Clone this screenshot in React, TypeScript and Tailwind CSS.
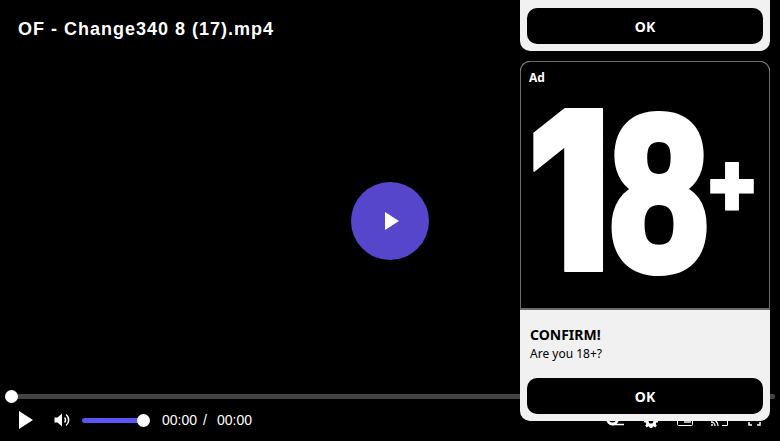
const adFont = { fontFamily: '"Noto Sans", sans-serif' };

/* ─── Ad picture ───────────────────────────────────────────── */

function AdPicture() {
  return (
    <svg viewBox="0 0 250 248" className="block h-[248px] w-[250px]">
      <g fill="white" stroke="white" strokeLinejoin="round" fontWeight="900" style={{ filter: "blur(0.6px)" }}>
        <text x="6" y="210" fontFamily="Inter, sans-serif" fontSize="222" strokeWidth="2" textLength="85" lengthAdjust="spacingAndGlyphs">1</text>
        <text x="90" y="208" fontFamily="Liberation Sans, sans-serif" fontWeight="700" fontSize="219" strokeWidth="10" textLength="98" lengthAdjust="spacingAndGlyphs">8</text>
        <text x="184" y="152" fontFamily="Inter, sans-serif" fontSize="90" strokeWidth="1" textLength="56" lengthAdjust="spacingAndGlyphs">+</text>
      </g>
    </svg>
  );
}

/* ─── Ad card ──────────────────────────────────────────────── */

function OkButton() {
  return (
    <button className="mx-[7px] flex h-[36px] w-[236px] items-center justify-center rounded-[10px] bg-black text-[14px] font-bold text-white">
      OK
    </button>
  );
}

function AdStack() {
  return (
    <div style={adFont} className="absolute bottom-[20px] right-[10px] z-10 flex w-[250px] flex-col gap-[10px]">
      <div className="rounded-b-[10px] bg-[#f1f1f1] pb-[7px] pt-[8px]">
        <OkButton />
      </div>
      <div className="overflow-hidden rounded-[10px] bg-[#f1f1f1] pb-[7px]">
        <div className="relative h-[249px] overflow-hidden rounded-t-[10px] border-x border-t border-b-2 border-[#6b6b6b] bg-black">
          <span className="absolute left-[8px] top-[7px] text-[12px] font-bold leading-[17px] text-white">Ad</span>
          <div className="-mx-px -mt-px">
            <AdPicture />
          </div>
        </div>
        <div className="h-[68px] px-[10px] pt-[15px] text-black">
          <div className="text-[14px] font-bold leading-[19px]">CONFIRM!</div>
          <div className="text-[12px] leading-[19px]">Are you 18+?</div>
        </div>
        <OkButton />
      </div>
    </div>
  );
}

/* ─── Player controls ──────────────────────────────────────── */

function RightIcons() {
  return (
    <div className="mr-[19px] flex items-center text-white">
      {/* Speed */}
      <svg viewBox="0 0 18 14" className="h-[14px] w-[18px]" fill="none" stroke="currentColor">
        <circle cx="6.500" cy="6" r="5" strokeWidth="3" />
        <path d="M6 11.500h12" strokeWidth="1.500" />
      </svg>
      {/* Settings */}
      <svg viewBox="0 0 18 18" preserveAspectRatio="none" className="ml-[20px] h-[16px] w-[14px]" fill="currentColor">
        <path d="M7.500 1h3l.4 2.200 1.600.7 1.900-1.300 2 2-1.300 1.900.7 1.600 2.200.4v3l-2.200.4-.7 1.600 1.300 1.900-2 2-1.900-1.300-1.600.7-.4 2.200h-3l-.4-2.200-1.600-.7-1.900 1.300-2-2 1.300-1.900-.7-1.600-2.200-.4v-3l2.200-.4.7-1.600-1.300-1.900 2-2 1.900 1.300 1.600-.7zM9 7a3 3 0 1 0 0 6 3 3 0 0 0 0-6z" />
      </svg>
      {/* Picture in picture */}
      <svg viewBox="0 0 16 12" className="ml-[19px] h-[12px] w-[16px]" fill="none" stroke="currentColor">
        <rect x="0.500" y="0.500" width="15" height="11" rx="1" />
        <rect x="7" y="4" width="7" height="5" fill="currentColor" fillOpacity="0.700" stroke="none" />
      </svg>
      {/* Cast */}
      <svg viewBox="0 0 17 12" className="ml-[18px] h-[12px] w-[17px]" fill="none" stroke="currentColor">
        <path d="M0.500 2V0.500h16v11H11" />
        <path d="M0 5a7 7 0 0 1 7 7M0 8a4 4 0 0 1 4 4" strokeWidth="1.300" />
        <circle cx="1" cy="11" r="1" fill="currentColor" stroke="none" />
      </svg>
      {/* Fullscreen */}
      <svg viewBox="0 0 13 12" className="ml-[20px] h-[12px] w-[13px]" fill="none" stroke="currentColor" strokeWidth="1.500">
        <path d="M1 4V1h3M9 1h3v3M12 8v3H9M4 11H1V8" />
      </svg>
    </div>
  );
}

function Controls() {
  return (
    <div className="absolute inset-x-0 bottom-0 h-[51px]">
      <div className="relative mx-[5px] mt-[4px] h-[5px] rounded-full bg-[#444444]">
        <div className="absolute left-0 top-[-4px] h-[13px] w-[13px] rounded-full bg-white" />
      </div>
      <div className="mt-[5px] flex h-[32px] items-center justify-between">
        <div className="flex items-center">
          <svg viewBox="0 0 14 18" className="ml-[19px] h-[18px] w-[14px]">
            <path d="M0 0l14 9-14 9z" fill="white" />
          </svg>
          <svg viewBox="0 0 16 16" className="ml-[21px] h-[16px] w-[16px]" fill="none">
            <path d="M0.500 5.500h3L8 1.500v13l-4.500-4h-3z" fill="white" />
            <path d="M10.500 5.500a3.500 3.500 0 0 1 0 5M12 2.500a7 7 0 0 1 0 11" stroke="white" strokeWidth="1.500" />
          </svg>
          <div className="relative ml-[12px] h-[5px] w-[62px] rounded-full bg-[#5b55f5]">
            <div className="absolute right-[-6px] top-[-4px] h-[13px] w-[13px] rounded-full bg-white" />
          </div>
          <div className="ml-[18px] flex text-[14px] text-white">
            <span>00:00</span>
            <span className="ml-[6px]">/</span>
            <span className="ml-[10px]">00:00</span>
          </div>
        </div>
        <RightIcons />
      </div>
    </div>
  );
}

export default function App() {
  return (
    <div
      style={{ fontFamily: '"Liberation Sans", Arial, sans-serif' }}
      className="relative h-[441px] w-[780px] overflow-hidden bg-black"
    >
      <div className="px-[18px] pt-[17px] text-[18px] font-bold leading-[24px] tracking-[1px] text-white">
        OF - Change340 8 (17).mp4
      </div>

      <button className="absolute left-[351px] top-[182px] flex h-[78px] w-[78px] items-center justify-center rounded-full bg-[#5546cc]">
        <svg viewBox="0 0 14 18" className="ml-[3px] h-[18px] w-[14px]">
          <path d="M0 0l14 9-14 9z" fill="white" />
        </svg>
      </button>

      <Controls />
      <AdStack />
    </div>
  );
}
